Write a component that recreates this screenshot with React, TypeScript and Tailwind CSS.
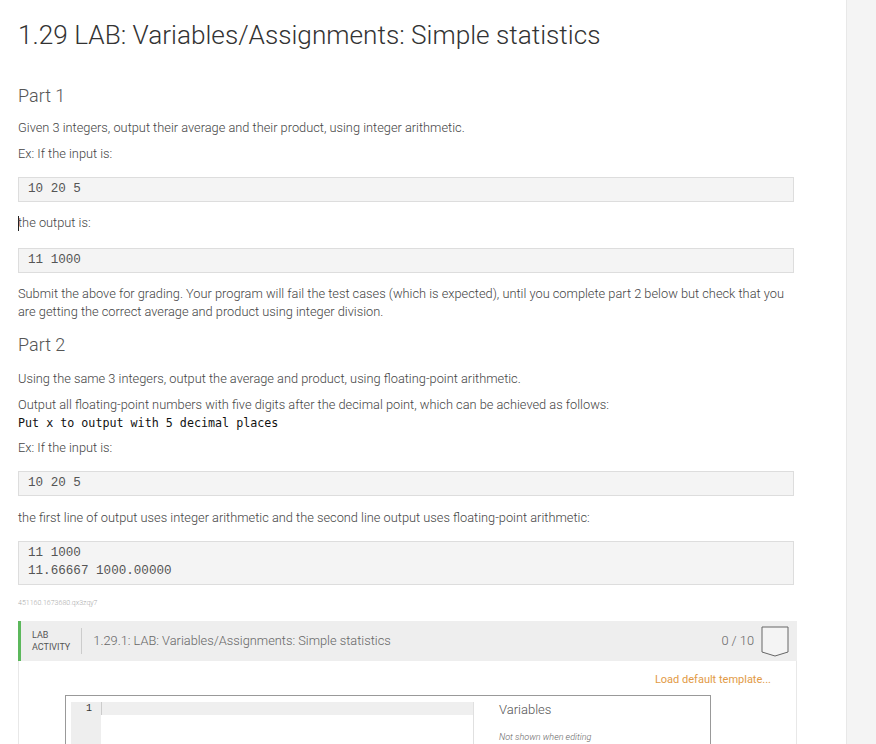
export default function App() {
  return (
    <div
      className="flex h-[744px] w-[876px] overflow-hidden bg-white text-[#444]"
      style={{ fontFamily: "Roboto, 'Liberation Sans', sans-serif" }}
    >
      <main className="w-[846px] shrink-0 pl-[18px] pr-[52px] pt-[18px] font-light">
        <h1 className="text-[26.2px] leading-[34px] font-light text-[#333]">
          1.29 LAB: Variables/Assignments: Simple statistics
        </h1>

        <h2 className="mt-[32px] text-[18px] leading-[24px] font-light text-[#555]">Part 1</h2>
        <p className="mt-[11px] text-[12.8px] leading-[18px]">
          Given 3 integers, output their average and their product, using integer arithmetic.
        </p>
        <p className="mt-[8px] text-[12.8px] leading-[18px]">Ex: If the input is:</p>
        <CodeBox lines={["10 20 5"]} className="mt-[14px]" />
        <p className="mt-[12px] flex items-center text-[12.8px] leading-[18px]">
          {/* text caret */}
          <span className="-mr-px h-[15px] w-px bg-[#222]" />
          the output is:
        </p>
        <CodeBox lines={["11 1000"]} className="mt-[16px]" />
        <p className="mt-[12px] w-[772px] text-[12.8px] leading-[18px]">
          Submit the above for grading. Your program will fail the test cases (which is expected), until you
          complete part 2 below but check that you are getting the correct average and product using integer
          division.
        </p>

        <h2 className="mt-[12px] text-[18px] leading-[24px] font-light text-[#555]">Part 2</h2>
        <p className="mt-[13px] text-[12.8px] leading-[18px]">
          Using the same 3 integers, output the average and product, using floating-point arithmetic.
        </p>
        <p className="mt-[8px] text-[12.8px] leading-[18px]">
          Output all floating-point numbers with five digits after the decimal point, which can be achieved as
          follows:
        </p>
        <p
          className="text-[11.7px] leading-[18px] font-normal text-[#111]"
          style={{ fontFamily: "'DejaVu Sans Mono', 'Liberation Mono', monospace" }}
        >
          Put x to output with 5 decimal places
        </p>
        <p className="mt-[7px] text-[12.8px] leading-[18px]">Ex: If the input is:</p>
        <CodeBox lines={["10 20 5"]} className="mt-[14px]" />
        <p className="mt-[13px] text-[12.8px] leading-[18px]">
          the first line of output uses integer arithmetic and the second line output uses floating-point
          arithmetic:
        </p>
        <CodeBox lines={["11 1000", "11.66667 1000.00000"]} className="mt-[14px] pb-[4px]" />
        <p className="mt-[13px] text-[7px] leading-[10px] text-[#aaa]">451160.1673680.qx3zqy7</p>

        {/* Lab activity card */}
        <section className="mt-[13px] w-[779px]">
          <div className="flex h-[40px] items-center border-l-[3px] border-[#5cb85c] bg-[#eee] pl-[11px] pr-[8px]">
            <div className="text-[9px] font-normal leading-[12px] text-[#555]">
              LAB
              <br />
              ACTIVITY
            </div>
            <div className="mx-[11px] h-[26px] w-px bg-[#ccc]" />
            <div className="flex-1 text-[12.8px] text-[#666]">1.29.1: LAB: Variables/Assignments: Simple statistics</div>
            <span className="mr-[7px] text-[12.8px] text-[#666]">0 / 10</span>
            <svg width="28" height="31" viewBox="0 0 28 31" fill="none">
              <path d="M1 1 H27 V26 L14 30 L1 26 Z" stroke="#666" strokeWidth="1" fill="#f4f4f4" />
            </svg>
          </div>
          <div className="h-[130px] border-x border-[#e8e8e8] bg-white">
            <div className="flex justify-end pr-[25px] pt-[12px] text-[11px] font-normal leading-[14px] text-[#e29a45]">
              Load default template...
            </div>
            <div className="ml-[46px] mt-[8px] flex h-[80px] w-[646px] border border-[#999]">
              <div className="ml-[5px] mt-[6px] flex w-[403px] border-r border-[#e0e0e0]">
                <div className="w-[30px] bg-[#eee] pr-[9px] text-right">
                  <div
                    className="h-[13px] text-[10px] leading-[13px] text-[#333]"
                    style={{ fontFamily: "'Liberation Mono', monospace" }}
                  >
                    1
                  </div>
                </div>
                <div className="h-[13px] flex-1 border-l border-[#ccc] bg-[#efefef]" />
              </div>
              <div className="pl-[25px] pt-[6px]">
                <div className="text-[13px] leading-[16px] text-[#555]">Variables</div>
                <div className="mt-[13px] text-[9px] leading-[12px] italic text-[#666]">Not shown when editing</div>
              </div>
            </div>
          </div>
        </section>
      </main>
      <aside className="h-full flex-1 border-l border-[#e8e8e8] bg-[#f4f4f4]" />
    </div>
  );
}

function CodeBox({ lines, className }: { lines: string[]; className?: string }) {
  return (
    <div
      className={`w-[776px] border border-[#ddd] bg-[#f4f4f4] px-[9px] pt-[2px] pb-[3px] text-[12.6px] leading-[18px] text-[#555] ${className ?? ""}`}
      style={{ fontFamily: "'Liberation Mono', 'Courier New', monospace" }}
    >
      {lines.map((l) => (
        <div key={l}>{l}</div>
      ))}
    </div>
  );
}
